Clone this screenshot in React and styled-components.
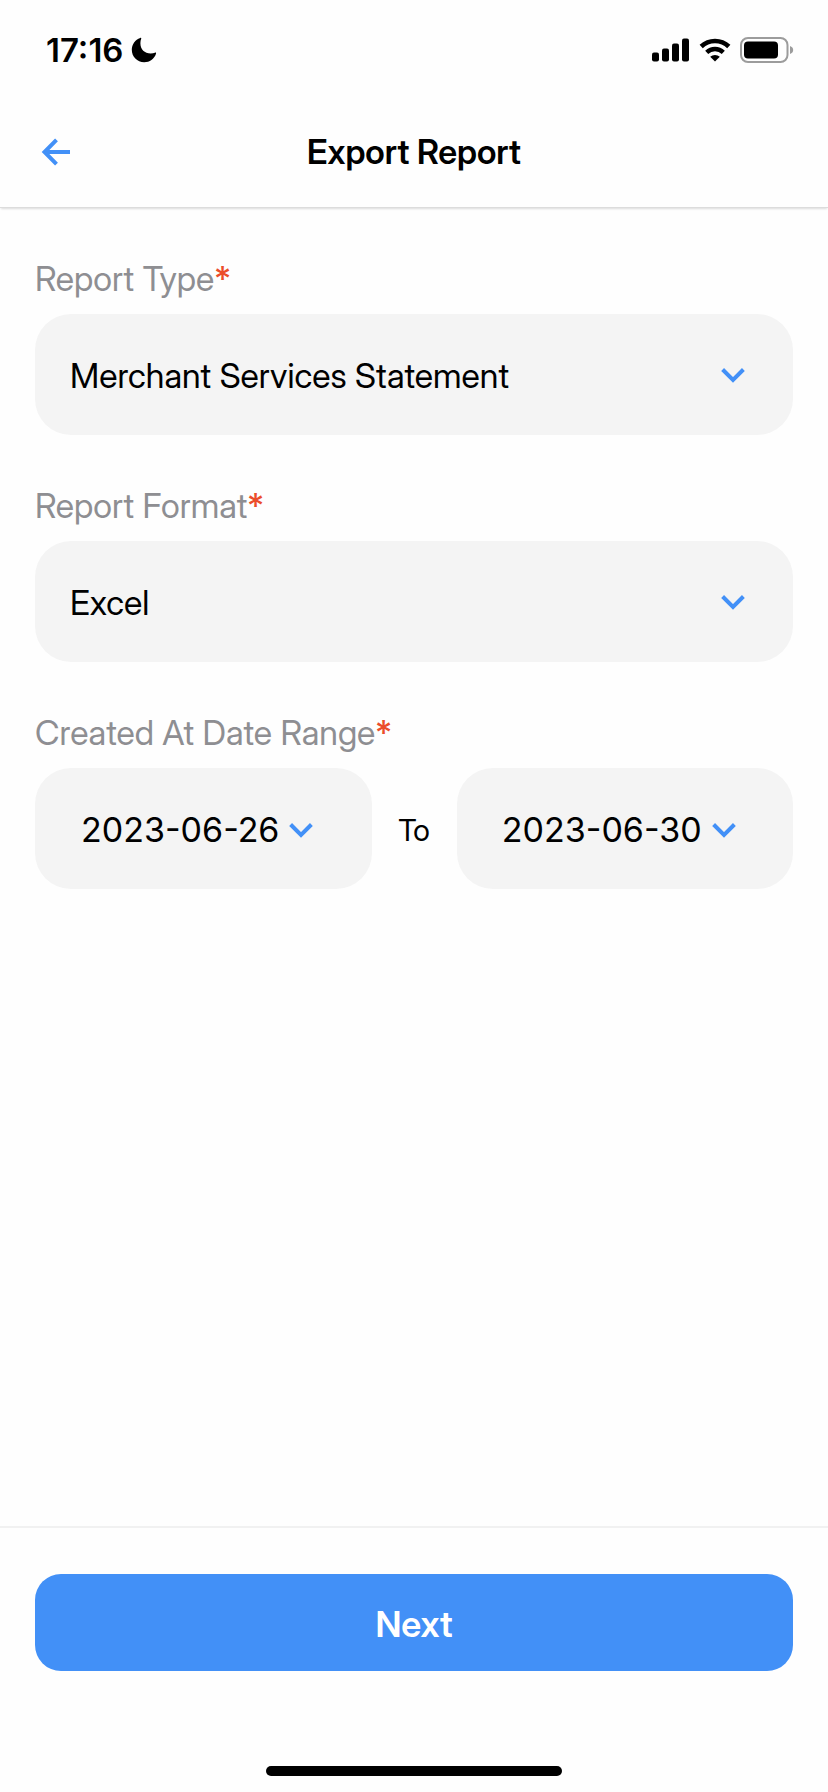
import React, { useState } from "react";
import styled, { createGlobalStyle } from "styled-components";

const blue = "#4290f7";
const textFont = `Inter, "Liberation Sans", sans-serif`;
const displayFont = `"Inter Display", Inter, "Liberation Sans", sans-serif`;

const GlobalStyle = createGlobalStyle`
  *, *::before, *::after { box-sizing: border-box; }
  body {
    margin: 0;
    background: #fefefe;
    color: #000;
    font-family: ${displayFont};
  }
  button, select { font: inherit; color: inherit; }
`;

const Screen = styled.div`
  display: flex;
  flex-direction: column;
  min-height: 100vh;
`;

const StatusBar = styled.div`
  display: flex;
  align-items: center;
  justify-content: space-between;
  height: 100px;
  padding: 0 34px 0 46px;
`;

const StatusGroup = styled.div`
  display: flex;
  align-items: center;
  gap: ${(p) => p.$gap}px;
`;

const Time = styled.time`
  font-family: ${textFont};
  font-size: 33px;
  line-height: 40px;
  font-weight: 600;
`;

const Header = styled.header`
  display: grid;
  grid-template-columns: 56px 1fr 56px;
  align-items: center;
  height: 108px;
  padding: 0 28px 4px;
  border-bottom: 1px solid #dcdcdc;
  box-shadow: 0 2px 2px -1px rgba(0, 0, 0, 0.14);
`;

const BackButton = styled.button`
  display: flex;
  align-items: center;
  justify-content: center;
  height: 56px;
  padding: 0;
  border: 0;
  background: none;
`;

const Title = styled.h1`
  margin: 0;
  font-size: 34px;
  line-height: 40px;
  font-weight: 600;
  text-align: center;
`;

const Form = styled.form`
  flex: 1;
  display: flex;
  flex-direction: column;
`;

const Fields = styled.div`
  flex: 1;
  display: flex;
  flex-direction: column;
  gap: 50px;
  padding: 50px 35px;
`;

const Field = styled.div`
  display: flex;
  flex-direction: column;
  gap: 14px;
`;

const Label = styled.label`
  font-size: 34px;
  line-height: 42px;
  color: #8e8e92;
`;

const Required = styled.span`
  color: #eb4d2b;
  font-weight: 500;
`;

const SelectBox = styled.div`
  display: grid;
  align-items: center;

  > * { grid-area: 1 / 1; }
  > svg {
    justify-self: end;
    margin-right: 42px;
    pointer-events: none;
  }
`;

const Select = styled.select`
  width: 100%;
  height: 121px;
  padding: 2px 84px 0 35px;
  border: 0;
  border-radius: 36px;
  appearance: none;
  background: #f4f4f4;
  font-size: 34px;
`;

const DateRange = styled.div`
  display: grid;
  grid-template-columns: 1fr 85px 1fr;
  align-items: center;
`;

const DateButton = styled.button`
  display: flex;
  align-items: center;
  justify-content: center;
  gap: 4px;
  height: 121px;
  padding: 2px 6px 0 0;
  border: 0;
  border-radius: 36px;
  background: #f4f4f4;
  font-family: ${textFont};
  font-size: 34px;
`;

const RangeWord = styled.span`
  padding-top: 2px;
  font-size: 30px;
  text-align: center;
`;

const Footer = styled.footer`
  display: flex;
  flex-direction: column;
  align-items: center;
  padding: 46px 35px 16px;
  border-top: 2px solid #f1f1f1;
`;

const NextButton = styled.button`
  width: 100%;
  height: 97px;
  padding: 2px 0 0;
  border: 0;
  border-radius: 26px;
  background: ${blue};
  color: #fff;
  font-size: 36px;
  font-weight: 600;
`;

const HomeIndicator = styled.div`
  width: 296px;
  height: 10px;
  margin-top: 95px;
  border-radius: 5px;
  background: #000;
`;

const Chevron = () => (
  <svg width="36" height="36" viewBox="0 0 36 36" fill="none" aria-hidden="true">
    <path d="M7.600 12.500 18 22.900 28.400 12.500" stroke={blue} strokeWidth="4" />
  </svg>
);

const BackArrow = () => (
  <svg width="30" height="30" viewBox="0 0 30 30" fill="none" aria-hidden="true">
    <path d="M15.500 2.800 3.500 15 15.500 27.200M3.500 15H29" stroke={blue} strokeWidth="4" />
  </svg>
);

const Moon = () => (
  <svg width="26" height="26" viewBox="0 0 26 26" aria-hidden="true">
    <path d="M9.200.9C9.900.6 10.500 1 10.200 1.800 9.700 3 9.400 4.500 9.400 6.200c0 6.200 4.200 10.200 10.300 10.200 1.700 0 3.100-.3 4.200-.7.8-.3 1.400.2 1.100 1C23.200 22 18.700 25.200 13.200 25.200 6.200 25.200.8 19.900.8 12.800.8 7.300 4.200 2.700 9.200.9Z" />
  </svg>
);

const Signal = () => (
  <svg width="38" height="24" viewBox="0 0 38 24" aria-hidden="true">
    <rect x="0" y="14.500" width="7" height="9" rx="2" />
    <rect x="10" y="10.500" width="7" height="13" rx="2" />
    <rect x="20" y="5.500" width="7" height="18" rx="2" />
    <rect x="30" y="0.500" width="7" height="23" rx="2" />
  </svg>
);

const Wifi = () => (
  <svg width="32" height="24" viewBox="0 0 32 24" aria-hidden="true">
    <path d="M2.200 8.500A20 20 0 0 1 29.800 8.500" fill="none" stroke="#000" strokeWidth="4.600" />
    <path d="M7.700 14.300A12 12 0 0 1 24.300 14.300" fill="none" stroke="#000" strokeWidth="4.400" />
    <path d="M11.200 18.800A7 7 0 0 1 20.800 18.800L16 23.600Z" />
  </svg>
);

const Battery = () => (
  <svg width="54" height="26" viewBox="0 0 54 26" aria-hidden="true">
    <rect x="1" y="1" width="46.500" height="24" rx="7" fill="none" stroke="#9c9c9c" strokeWidth="2" />
    <rect x="4" y="4.500" width="34" height="17" rx="4" />
    <path d="M50 9c2 .7 3.200 2.200 3.200 4S52 16.300 50 17Z" fill="#9c9c9c" />
  </svg>
);

function SelectField({ id, label, options }) {
  return (
    <Field>
      <Label htmlFor={id}>
        {label}
        <Required>*</Required>
      </Label>
      <SelectBox>
        <Select id={id} required defaultValue={options[0]}>
          {options.map((option) => (
            <option key={option}>{option}</option>
          ))}
        </Select>
        <Chevron />
      </SelectBox>
    </Field>
  );
}

export default function App() {
  const [range] = useState({ from: "2023-06-26", to: "2023-06-30" });

  return (
    <>
      <GlobalStyle />
      <Screen>
        <StatusBar>
          <StatusGroup $gap={8}>
            <Time>17:16</Time>
            <Moon />
          </StatusGroup>
          <StatusGroup $gap={9}>
            <Signal />
            <Wifi />
            <Battery />
          </StatusGroup>
        </StatusBar>
        <Header>
          <BackButton type="button" aria-label="Back">
            <BackArrow />
          </BackButton>
          <Title>Export Report</Title>
        </Header>
        <Form onSubmit={(event) => event.preventDefault()}>
          <Fields>
            <SelectField id="report-type" label="Report Type" options={["Merchant Services Statement"]} />
            <SelectField id="report-format" label="Report Format" options={["Excel"]} />
            <Field role="group" aria-labelledby="date-range">
              <Label as="span" id="date-range">
                Created At Date Range
                <Required>*</Required>
              </Label>
              <DateRange>
                <DateButton type="button" aria-haspopup="dialog">
                  {range.from}
                  <Chevron />
                </DateButton>
                <RangeWord>To</RangeWord>
                <DateButton type="button" aria-haspopup="dialog">
                  {range.to}
                  <Chevron />
                </DateButton>
              </DateRange>
            </Field>
          </Fields>
          <Footer>
            <NextButton type="submit">Next</NextButton>
            <HomeIndicator />
          </Footer>
        </Form>
      </Screen>
    </>
  );
}
